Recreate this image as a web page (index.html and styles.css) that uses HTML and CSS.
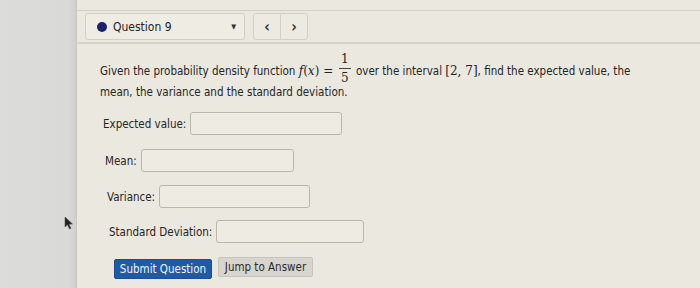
FILE: index.html
```html
<!DOCTYPE html>
<html>
<head>
<meta charset="utf-8">
<link rel="stylesheet" href="styles.css">
</head>
<body>
<div class="screen">
  <aside class="gutter">
    <svg class="cursor" width="10" height="14" viewBox="0 0 10 14"><path d="M1 1 L1 11 L3.5 8.8 L5.5 13 L7 12.3 L5 8.2 L8.5 8 Z" fill="#222" stroke="#555" stroke-width="0.6"/></svg>
  </aside>
  <main class="panel">
    <div class="toolbar">
      <div class="qselect">
        <span class="dot"></span>
        <span class="qlabel">Question 9</span>
        <span class="caret">▼</span>
      </div>
      <div class="nav">
        <span class="navbtn">‹</span>
        <span class="navbtn">›</span>
      </div>
    </div>
    <div class="content">
      <p class="prompt">Given the probability density function <span class="math"><i>f</i>(<i>x</i>) = <span class="frac"><span class="num">1</span><span class="den">5</span></span></span> over the interval <span class="math">[2, 7]</span>, find the expected value, the<br>mean, the variance and the standard deviation.</p>
      <div class="row r1"><label>Expected value:</label><span class="box"></span></div>
      <div class="row r2"><label>Mean:</label><span class="box"></span></div>
      <div class="row r3"><label>Variance:</label><span class="box"></span></div>
      <div class="row r4"><label>Standard Deviation:</label><span class="box"></span></div>
      <div class="actions">
        <button class="submit">Submit Question</button>
        <button class="jump">Jump to Answer</button>
      </div>
    </div>
  </main>
</div>
</body>
</html>
```
FILE: styles.css
```css
html, body { margin: 0; padding: 0; }
body {
  width: 700px; height: 288px; overflow: hidden;
  background: #e9e6de;
  font-family: "DejaVu Sans Condensed", "DejaVu Sans", sans-serif;
  color: #2a2a2a;
}
.screen { display: flex; height: 288px; }
.gutter {
  width: 76px; flex: none; position: relative;
  background: linear-gradient(90deg, #dcdcda 0%, #d9d9d7 90%, #cfcfcc 100%);
  border-right: 1px solid #c6c5c0;
}
.cursor { position: absolute; left: 64px; top: 216px; }
.panel { flex: 1; background: #ebe8df; padding-top: 10px; }
.toolbar {
  display: flex; gap: 8px; align-items: center;
  border-top: 1px solid #d3d0c8; border-bottom: 2px solid #d6d3cb;
  padding: 2px 0 2px 8px;
}
.qselect {
  width: 160px; height: 27px; box-sizing: border-box;
  border: 1px solid #d2cfc7; border-radius: 3px; background: #efece4;
  display: flex; align-items: center; padding: 0 8px 0 11px;
}
.dot { width: 10px; height: 10px; border-radius: 50%; background: #1b236b; flex: none; }
.qlabel { margin-left: 6px; font-size: 12px; color: #222; flex: 1; }
.caret { font-size: 7px; color: #333; }
.nav {
  display: flex; height: 27px; box-sizing: border-box;
  border: 1px solid #d2cfc7; border-radius: 3px; background: #edeae2;
}
.navbtn {
  width: 26px; display: flex; align-items: center; justify-content: center;
  font-size: 15px; color: #333; font-weight: bold;
}
.navbtn + .navbtn { border-left: 1px solid #d2cfc7; }
.content { padding: 17px 0 0 23px; }
.prompt { margin: 0; font-size: 11.5px; line-height: 21px; color: #252525; }
.math { font-family: "DejaVu Serif", "Liberation Serif", serif; font-size: 12px; }
.frac {
  display: inline-flex; flex-direction: column; align-items: center;
  vertical-align: 12px; line-height: 12px; margin: -16px 2px -16px 2px;
}
.num { border-bottom: 1px solid #444; padding: 0 2px 3px; }
.den { padding-top: 3px; }
.row { display: flex; align-items: center; gap: 4px; font-size: 11.5px; color: #252525; }
.box {
  height: 23px; box-sizing: border-box;
  border: 1px solid #b9b6ae; border-radius: 3px; background: #eeebe3;
}
.r1 { margin: 9px 0 0 3px; }
.r1 .box { width: 152px; }
.r2 { margin: 14px 0 0 5px; }
.r2 .box { width: 153px; }
.r3 { margin: 13px 0 0 7px; }
.r3 .box { width: 151px; }
.r4 { margin: 12px 0 0 9px; }
.r4 .box { width: 148px; }
.actions { display: flex; gap: 6px; align-items: flex-start; margin: 14px 0 0 14px; }
button { font-family: inherit; font-size: 11.5px; border-radius: 2px; padding: 0; height: 20px; }
.submit { width: 98px; background: #1e5aa6; color: #f2f4f8; border: 1px solid #1a4f93; margin-top: 2px; }
.jump { width: 95px; background: #d8d5ce; color: #2a2a2a; border: 1px solid #c7c4bc; }
```
